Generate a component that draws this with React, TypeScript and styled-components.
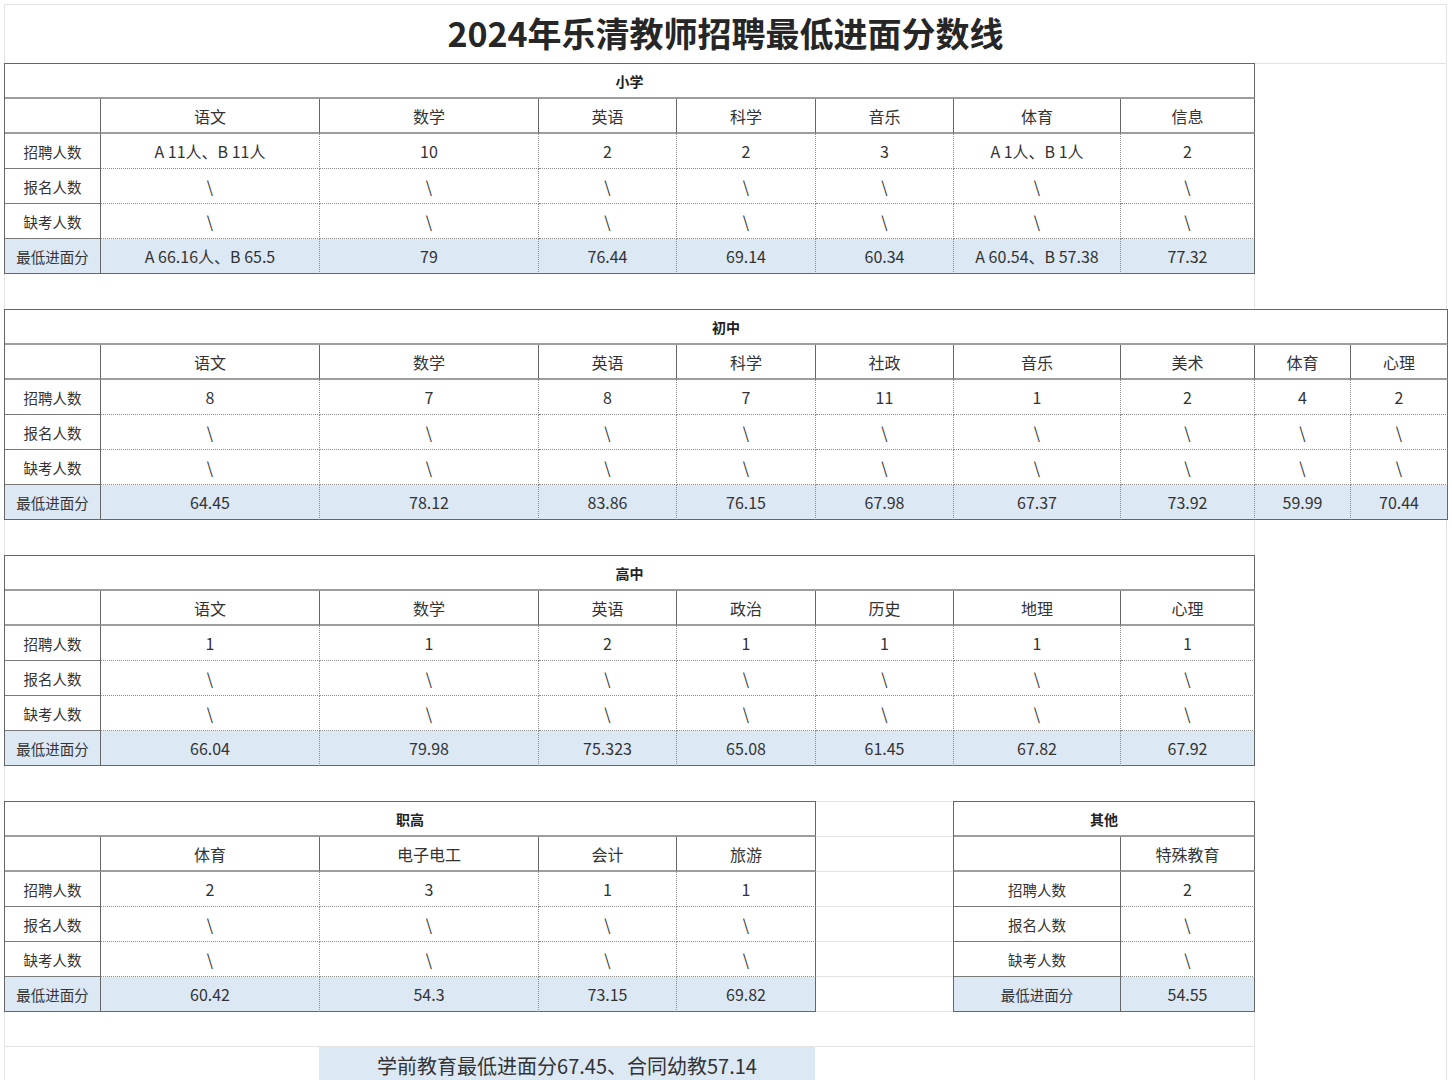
import styled, { createGlobalStyle } from 'styled-components';

const GlobalStyle = createGlobalStyle`
  html, body {
    margin: 0;
    padding: 0;
    background: #fff;
  }
  body {
    font-family: 'Noto Sans CJK SC', 'Noto Sans', sans-serif;
    color: #333;
  }
  * {
    box-sizing: border-box;
  }
`;

// column widths of the sheet, left to right
const COLS = [96, 219, 219, 138, 139, 138, 167, 134, 96, 97];
const ROW = 35;
const LIGHT = '#e3e3e3';
const DARK = '#666';
const DOT = '#8c8c8c';
const BLUE = '#dce8f4';

type Row = { label: string; values: string[]; score?: boolean };

const slash = (n: number) => Array(n).fill('\\');

const makeRows = (hire: string[], score: string[]): Row[] => [
  { label: '招聘人数', values: hire },
  { label: '报名人数', values: slash(hire.length) },
  { label: '缺考人数', values: slash(hire.length) },
  { label: '最低进面分', values: score, score: true },
];

const primary = {
  title: '小学',
  heads: ['语文', '数学', '英语', '科学', '音乐', '体育', '信息'],
  rows: makeRows(
    ['A 11人、B 11人', '10', '2', '2', '3', 'A 1人、B 1人', '2'],
    ['A 66.16人、B 65.5', '79', '76.44', '69.14', '60.34', 'A 60.54、B 57.38', '77.32'],
  ),
};

const junior = {
  title: '初中',
  heads: ['语文', '数学', '英语', '科学', '社政', '音乐', '美术', '体育', '心理'],
  rows: makeRows(
    ['8', '7', '8', '7', '11', '1', '2', '4', '2'],
    ['64.45', '78.12', '83.86', '76.15', '67.98', '67.37', '73.92', '59.99', '70.44'],
  ),
};

const senior = {
  title: '高中',
  heads: ['语文', '数学', '英语', '政治', '历史', '地理', '心理'],
  rows: makeRows(
    ['1', '1', '2', '1', '1', '1', '1'],
    ['66.04', '79.98', '75.323', '65.08', '61.45', '67.82', '67.92'],
  ),
};

const vocational = {
  title: '职高',
  heads: ['体育', '电子电工', '会计', '旅游'],
  rows: makeRows(['2', '3', '1', '1'], ['60.42', '54.3', '73.15', '69.82']),
};

const other = {
  title: '其他',
  heads: ['特殊教育'],
  rows: makeRows(['2'], ['54.55']),
};

type Variant = 'section' | 'head' | 'label' | 'value';

const SheetTable = ({ cols, title, heads, rows }: { cols: number[]; title: string; heads: string[]; rows: Row[] }) => {
  const last = cols.length - 1;
  return (
    <Grid $cols={cols}>
      <Cell $variant='section'>{title}</Cell>
      <Cell $variant='head' />
      {heads.map((h, i) => (
        <Cell key={h + i} $variant='head' $edge={i + 1 === last}>
          {h}
        </Cell>
      ))}
      {rows.map((r, ri) => {
        const bottom = ri === rows.length - 1;
        return [
          <Cell key={r.label} $variant='label' $score={r.score} $bottom={bottom}>
            {r.label}
          </Cell>,
          ...r.values.map((v, i) => (
            <Cell key={r.label + i} $variant='value' $score={r.score} $bottom={bottom} $edge={i + 1 === last}>
              {v}
            </Cell>
          )),
        ];
      })}
    </Grid>
  );
};

const App = () => (
  <>
    <GlobalStyle />
    <Sheet>
      <Title>2024年乐清教师招聘最低进面分数线</Title>

      <Band>
        <SheetTable cols={COLS.slice(0, 8)} {...primary} />
        <Filler $top />
      </Band>
      <Spacer />

      <Band>
        <SheetTable cols={COLS} {...junior} />
      </Band>
      <Spacer />

      <Band>
        <SheetTable cols={COLS.slice(0, 8)} {...senior} />
        <Filler />
      </Band>
      <Spacer />

      <Band>
        <SheetTable cols={COLS.slice(0, 5)} {...vocational} />
        <GapColumn>
          {Array.from({ length: 6 }, (_, i) => (
            <GapCell key={i} />
          ))}
        </GapColumn>
        <SheetTable cols={COLS.slice(6, 8)} {...other} />
        <Filler />
      </Band>
      <Spacer $bottom />

      <FooterRow>
        <FooterBlank />
        <FooterNote>学前教育最低进面分67.45、合同幼教57.14</FooterNote>
        <FooterRest />
      </FooterRow>
    </Sheet>
  </>
);

export default App;

const Sheet = styled.div`
  width: 1443px;
  margin: 4px 0 0 4px;
  border-top: 1px solid ${LIGHT};
  border-left: 1px solid ${LIGHT};
  border-right: 1px solid ${LIGHT};
  display: flex;
  flex-direction: column;
`;

const Title = styled.div`
  height: 58px;
  padding-bottom: 3px;
  display: flex;
  align-items: center;
  justify-content: center;
  font-size: 34px;
  font-weight: 700;
  color: #262626;
`;

const Band = styled.div`
  display: flex;
  align-items: stretch;
  margin-left: -1px;
`;

const Grid = styled.div<{ $cols: number[] }>`
  display: grid;
  grid-template-columns: ${p => p.$cols.map(c => `${c}px`).join(' ')};
  grid-auto-rows: ${ROW}px;
  border-top: 1px solid ${DARK};
  border-left: 1px solid ${DARK};
  flex-shrink: 0;
`;

const Cell = styled.div<{ $variant: Variant; $edge?: boolean; $bottom?: boolean; $score?: boolean }>`
  display: flex;
  align-items: center;
  justify-content: center;
  white-space: nowrap;
  color: #333;
  background: ${p => (p.$score ? BLUE : '#fff')};
  font-size: ${p => (p.$variant === 'label' ? '14.5px' : '16px')};

  ${p =>
    p.$variant === 'section' &&
    `
    grid-column: 1 / -1;
    font-size: 14px;
    font-weight: 700;
    color: #222;
    border-right: 1px solid ${DARK};
    border-bottom: 2px solid #9d9d9d;
  `}

  ${p =>
    p.$variant === 'head' &&
    `
    border-right: 1px solid ${DARK};
    border-bottom: 2px solid #9d9d9d;
  `}

  ${p =>
    p.$variant === 'label' &&
    `
    border-right: 1px solid ${DARK};
    border-bottom: 1px solid ${p.$bottom ? DARK : '#7a7a7a'};
  `}

  ${p =>
    p.$variant === 'value' &&
    `
    border-right: 1px ${p.$edge ? 'solid' : 'dotted'} ${p.$edge ? DARK : DOT};
    border-bottom: 1px ${p.$bottom ? 'solid' : 'dotted'} ${p.$bottom ? DARK : DOT};
  `}
`;

const Filler = styled.div<{ $top?: boolean }>`
  flex: 1;
  border-top: 1px solid ${p => (p.$top ? LIGHT : 'transparent')};
`;

const GapColumn = styled.div`
  width: 137px;
  flex-shrink: 0;
  display: grid;
  grid-auto-rows: ${ROW}px;
  border-top: 1px solid ${LIGHT};
`;

const GapCell = styled.div`
  border-bottom: 1px solid ${LIGHT};
`;

const Spacer = styled.div<{ $bottom?: boolean }>`
  height: ${ROW}px;
  width: 1250px;
  border-right: 1px solid ${LIGHT};
  border-bottom: 1px solid ${p => (p.$bottom ? LIGHT : 'transparent')};
`;

const FooterRow = styled.div`
  display: flex;
  height: 36px;
`;

const FooterBlank = styled.div`
  width: 314px;
  flex-shrink: 0;
`;

const FooterNote = styled.div`
  width: 496px;
  flex-shrink: 0;
  background: ${BLUE};
  display: flex;
  align-items: center;
  justify-content: center;
  font-size: 20px;
  color: #333;
`;

const FooterRest = styled.div`
  width: 440px;
  flex-shrink: 0;
  border-right: 1px solid ${LIGHT};
`;
